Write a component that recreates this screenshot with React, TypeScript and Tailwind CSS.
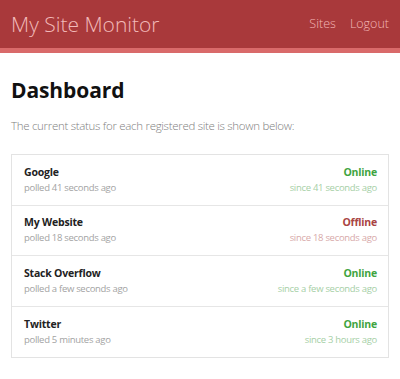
import React from 'react';

interface Site {
	name: string;
	polled: string;
	online: boolean;
	since: string;
}

const sites: Site[] = [
	{ name: 'Google', polled: 'polled 41 seconds ago', online: true, since: 'since 41 seconds ago' },
	{ name: 'My Website', polled: 'polled 18 seconds ago', online: false, since: 'since 18 seconds ago' },
	{ name: 'Stack Overflow', polled: 'polled a few seconds ago', online: true, since: 'since a few seconds ago' },
	{ name: 'Twitter', polled: 'polled 5 minutes ago', online: true, since: 'since 3 hours ago' },
];

const SiteRow = ({ site }: { site: Site }) => (
	<li className="flex items-center justify-between h-[50.5px] pl-[12px] pr-[11px] border-b border-[#e6e6e6] last:border-b-0">
		<div className="flex flex-col">
			<span className="text-[10.5px] leading-[15px] font-bold tracking-[-0.2px] text-[#222]">{site.name}</span>
			<span className="text-[9.5px] leading-[15px] tracking-[-0.3px] text-[#a3a3a3]">{site.polled}</span>
		</div>
		<div className="flex flex-col items-end">
			<span
				className={
					site.online
						? 'text-[10.5px] leading-[15px] font-bold tracking-[-0.2px] text-[#3fa43f]'
						: 'text-[10.5px] leading-[15px] font-bold tracking-[-0.2px] text-[#a94442]'
				}
			>
				{site.online ? 'Online' : 'Offline'}
			</span>
			<span
				className={
					site.online
						? 'text-[9.5px] leading-[15px] tracking-[-0.3px] text-[#a6cfa6]'
						: 'text-[9.5px] leading-[15px] tracking-[-0.3px] text-[#d7a9a9]'
				}
			>
				{site.since}
			</span>
		</div>
	</li>
);

const App = () => {
	return (
		<div className="min-h-[379px] bg-white font-['Open_Sans',sans-serif]">
			<nav className="border-b-[5px] border-[#d96a6a] bg-[#a9393b]">
				<div className="flex items-center justify-between h-[48px] px-[11px]">
					<a className="text-[21px] font-light text-[#f2b9b9] leading-none">My Site Monitor</a>
					<div className="flex gap-[14px] text-[12.5px] font-light text-[#f3b6b6]">
						<a>Sites</a>
						<a>Logout</a>
					</div>
				</div>
			</nav>
			<main className="px-[11px]">
				<h1 className="mt-[22px] text-[21px] leading-[30px] font-bold tracking-[-0.1px] text-[#111]">Dashboard</h1>
				<p className="mt-[12px] text-[11.5px] leading-[18px] font-light tracking-[-0.3px] text-[#808080]">
					The current status for each registered site is shown below:
				</p>
				<ul className="mt-[19px] border border-[#e3e3e3]">
					{sites.map((site) => (
						<SiteRow key={site.name} site={site} />
					))}
				</ul>
			</main>
		</div>
	);
};

export default App;
